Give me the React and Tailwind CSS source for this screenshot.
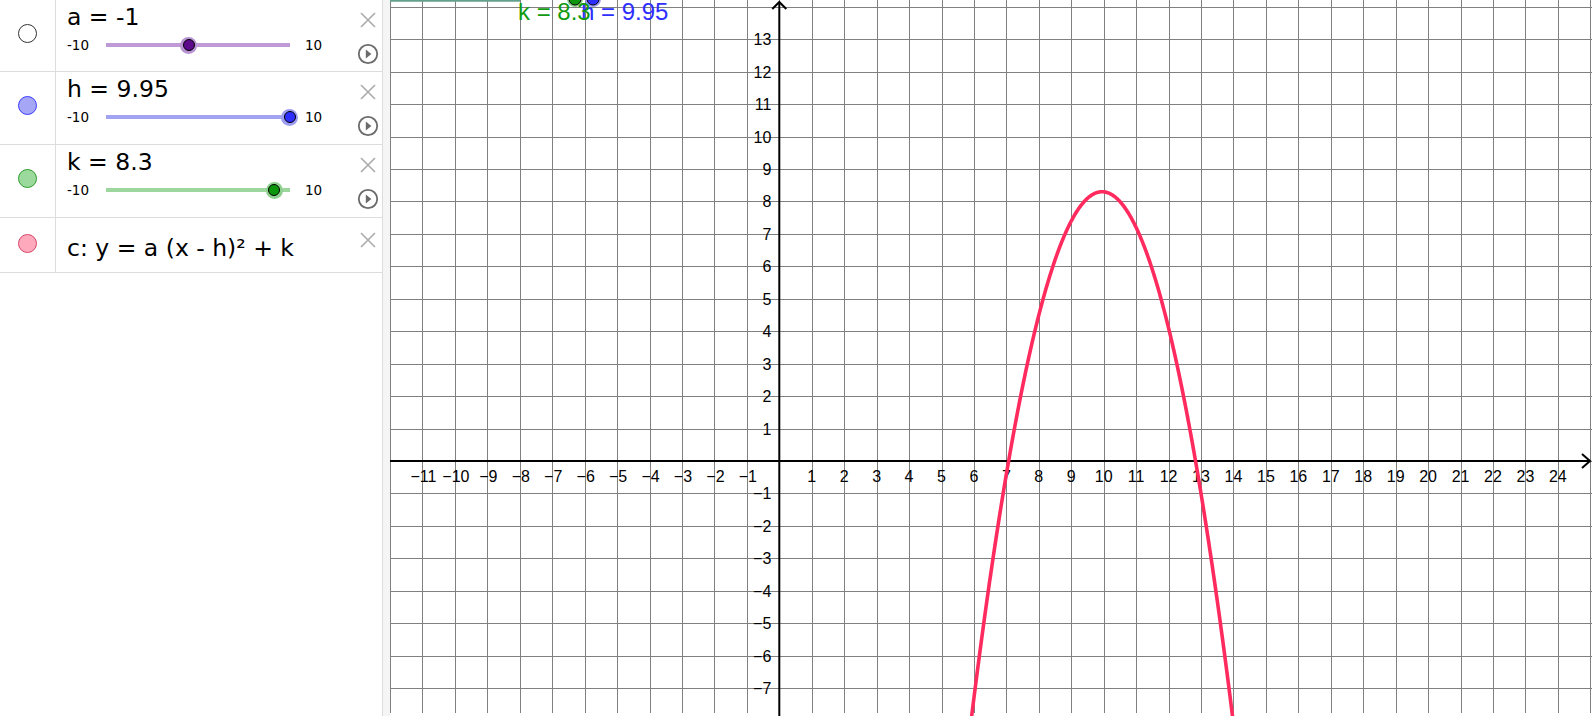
import React from 'react';

const OX = 779.3;
const OY = 461;
const S = 32.44;
const px = (x) => OX + x * S;
const py = (y) => OY - y * S;

const sliders = [
  {
    name: 'a = -1',
    value: -1,
    marker: 'bg-white border-[#333333]',
    track: 'bg-[#c09ad6]',
    halo: 'bg-[#b893d2]',
    thumb: 'bg-[#5e0b8b]',
    rowH: 'h-[72px]',
  },
  {
    name: 'h = 9.95',
    value: 9.95,
    marker: 'bg-[#a6a6f6] border-[#3a3aff]',
    track: 'bg-[#a3a3f3]',
    halo: 'bg-[#9c9cf0]',
    thumb: 'bg-[#2e2eff]',
    rowH: 'h-[73px]',
  },
  {
    name: 'k = 8.3',
    value: 8.3,
    marker: 'bg-[#9cd99c] border-[#2a9d2a]',
    track: 'bg-[#9ed79e]',
    halo: 'bg-[#8fcf8f]',
    thumb: 'bg-[#0c960c]',
    rowH: 'h-[73px]',
  },
];

function CloseIcon() {
  return (
    <svg width="16" height="16" viewBox="0 0 16 16" className="block">
      <path d="M1 1L15 15M15 1L1 15" stroke="#ababab" strokeWidth="1.6" fill="none" />
    </svg>
  );
}

function PlayIcon() {
  return (
    <svg width="22" height="22" viewBox="0 0 22 22" className="block">
      <circle cx="11" cy="11" r="9.2" stroke="#6b6b6b" strokeWidth="1.8" fill="none" />
      <path d="M8.8 6.6L14.4 11L8.8 15.4Z" fill="#6b6b6b" />
    </svg>
  );
}

function SliderRow({ s }) {
  const pos = ((s.value + 10) / 20) * 184;
  return (
    <div className={`flex ${s.rowH} border-b border-[#dddddd]`}>
      <div className="w-[56px] shrink-0 border-r border-[#dddddd] flex justify-center pt-[24px]">
        <div className={`w-[19px] h-[19px] rounded-full border ${s.marker}`} />
      </div>
      <div className="flex-1 flex flex-col pl-[11px] pt-[3px]">
        <div className="h-[28px] leading-[28px] text-[23.5px] text-black font-['DejaVu_Sans',sans-serif]">
          {s.name}
        </div>
        <div className="mt-[6px] h-[16px] flex items-center text-[13.5px] text-black font-['DejaVu_Sans',sans-serif]">
          <span className="w-[39px]">-10</span>
          <div className={`relative w-[184px] h-[4px] ${s.track}`}>
            <div
              className={`absolute top-1/2 w-[17px] h-[17px] -ml-[8.5px] -mt-[8.5px] rounded-full ${s.halo} flex items-center justify-center`}
              style={{ left: pos }}
            >
              <div className={`w-[12px] h-[12px] rounded-full border border-black ${s.thumb}`} />
            </div>
          </div>
          <span className="ml-[15px]">10</span>
        </div>
      </div>
      <div className="w-[28px] shrink-0 flex flex-col items-center pt-[12px]">
        <CloseIcon />
        <div className="mt-[15px]">
          <PlayIcon />
        </div>
      </div>
    </div>
  );
}

function Graphics() {
  const vx = [];
  for (let i = -12; i <= 25; i++) vx.push(i);
  const hy = [];
  for (let j = -7; j <= 14; j++) hy.push(j);

  const pts = [];
  for (let x = 5.5; x <= 14.4; x += 0.02) {
    const y = -(x - 9.95) * (x - 9.95) + 8.3;
    pts.push(`${px(x).toFixed(2)},${py(y).toFixed(2)}`);
  }

  const xl = [];
  for (let i = -11; i <= 24; i++) if (i !== 0) xl.push(i);
  const yl = [];
  for (let j = -7; j <= 13; j++) if (j !== 0) yl.push(j);
  const lab = (n) => (n < 0 ? `\u2212${-n}` : `${n}`);

  return (
    <svg width="1204" height="716" viewBox="390 0 1204 716" className="block">
      <rect x="390" y="0" width="1204" height="716" fill="#ffffff" />
      {vx.map((i) => (
        <line
          key={`v${i}`}
          x1={Math.round(px(i)) + 0.5}
          x2={Math.round(px(i)) + 0.5}
          y1="0"
          y2="713"
          stroke="#808080"
          strokeWidth="1"
        />
      ))}
      {hy.map((j) => (
        <line
          key={`h${j}`}
          x1="390"
          x2="1592"
          y1={Math.round(py(j)) + 0.5}
          y2={Math.round(py(j)) + 0.5}
          stroke="#808080"
          strokeWidth="1"
        />
      ))}
      {/* axes */}
      <line x1="390" x2="1590" y1={OY} y2={OY} stroke="#000" strokeWidth="2" />
      <polyline points={`1582,${OY - 7} 1590,${OY} 1582,${OY + 7}`} fill="none" stroke="#000" strokeWidth="2" />
      <line x1={OX} x2={OX} y1="2" y2="716" stroke="#000" strokeWidth="2" />
      <polyline points={`${OX - 7},9 ${OX},2 ${OX + 7},9`} fill="none" stroke="#000" strokeWidth="2" />
      <g fontFamily="'Liberation Sans', Arial, sans-serif" fontSize="16" fill="#000">
        {xl.map((i) => (
          <text key={`xl${i}`} x={px(i) + (i < 0 ? 1 : 0)} y={OY + 21} textAnchor="middle">
            {lab(i)}
          </text>
        ))}
        {yl.map((j) => (
          <text key={`yl${j}`} x={OX - 8} y={py(j) + 6} textAnchor="end">
            {lab(j)}
          </text>
        ))}
      </g>
      {/* curve */}
      <polyline points={pts.join(' ')} fill="none" stroke="#ff2b5e" strokeWidth="3.6" strokeLinejoin="round" />
      {/* sliders drawn in graphics view */}
      <line x1="390" x2="520" y1="0.8" y2="0.8" stroke="#63a08d" strokeWidth="2" />
      <circle cx="593" cy="-1" r="8" fill="#9c9cf0" />
      <circle cx="593" cy="-1" r="6" fill="#2e2eff" stroke="#000" strokeWidth="1" />
      <circle cx="575" cy="-1" r="8" fill="#8fcf8f" />
      <circle cx="575" cy="-1" r="6" fill="#0c960c" stroke="#000" strokeWidth="1" />
      <g fontFamily="'Liberation Sans', Arial, sans-serif" fontSize="24">
        <text x="581" y="20" fill="#2e2eff">h = 9.95</text>
        <text x="518" y="20" fill="#109a10">k = 8.3</text>
      </g>
    </svg>
  );
}

export default function App() {
  return (
    <div className="flex w-[1594px] h-[716px] overflow-hidden bg-white">
      <div className="w-[383px] shrink-0 h-full border-r border-[#dddddd] bg-white">
        {sliders.map((s) => (
          <SliderRow key={s.name} s={s} />
        ))}
        <div className="flex h-[55px] border-b border-[#dddddd]">
          <div className="w-[56px] shrink-0 border-r border-[#dddddd] flex justify-center pt-[16px]">
            <div className="w-[19px] h-[19px] rounded-full border bg-[#ffa9bd] border-[#d6456a]" />
          </div>
          <div className="flex-1 pl-[11px] pt-[16px]">
            <div className="h-[28px] leading-[28px] text-[23.5px] text-black font-['DejaVu_Sans',sans-serif] whitespace-nowrap">
              c: y = a (x - h)² + k
            </div>
          </div>
          <div className="w-[28px] shrink-0 flex flex-col items-center pt-[14px]">
            <CloseIcon />
          </div>
        </div>
      </div>
      <div className="w-[7px] shrink-0 h-full bg-[#f5f5f5]" />
      <div className="flex-1 h-full overflow-hidden">
        <Graphics />
      </div>
    </div>
  );
}
